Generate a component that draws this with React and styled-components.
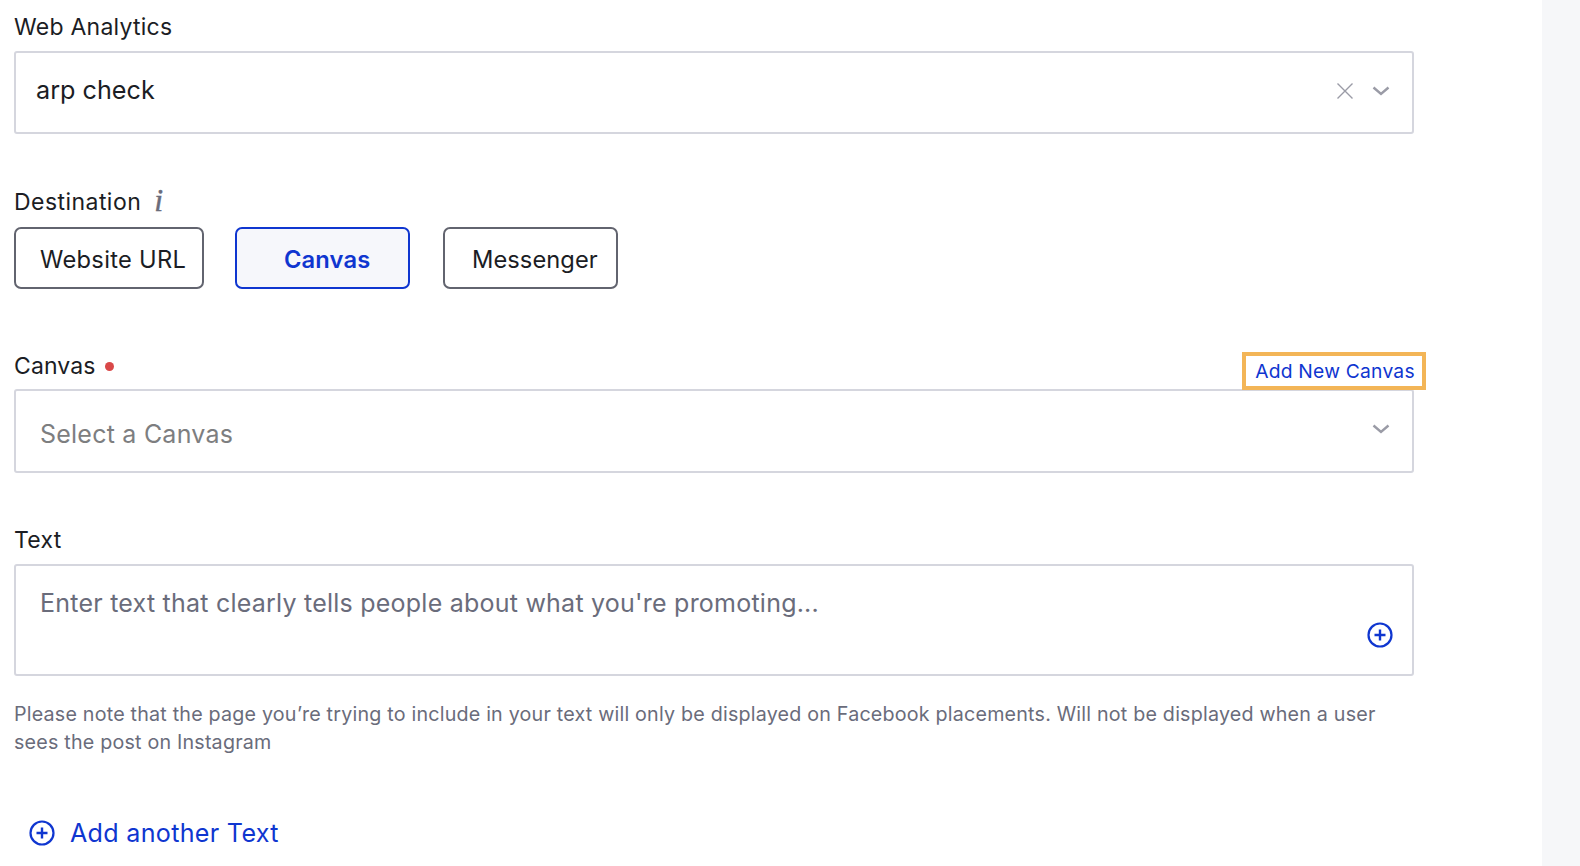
import React from 'react';
import styled, { createGlobalStyle } from 'styled-components';

const GlobalStyle = createGlobalStyle`
  html, body { margin: 0; padding: 0; background: #fff; }
  body { font-family: Inter, "Liberation Sans", sans-serif; color: #1b1d24; }
`;

const BLUE = '#0f36d0';

//STYLE
const Page = styled.div`display: flex; justify-content: space-between; height: 866px; overflow: hidden; background: #fff;`;
const Form = styled.div`width: 1400px; margin-left: 14px; display: flex; flex-direction: column;`;
const Sidebar = styled.div`width: 38px; background: #f6f7f9;`;

const Label = styled.div`
  display: flex; align-items: center; height: 28px; font-size: 23px; line-height: 28px; letter-spacing: 0.25px; color: #1b1d24;
`;
const TopLabel = styled(Label)`margin-top: 13px; margin-bottom: 10px;`;
const Box = styled.div`
  box-sizing: border-box; display: flex; align-items: ${p => p.$top ? 'flex-start' : 'center'}; width: 100%; height: ${p => p.$height}px;
  padding: ${p => p.$top ? '22px 22px 0 24px' : '0 22px 4px 24px'};
  background: #fff; border: 2px solid #d5d6de; border-radius: 3px; position: relative;
`;
const Value = styled.span`flex: 1; font-size: 25.2px; color: #1b1d24; margin-left: -4px; margin-bottom: 2px;`;
const Placeholder = styled.span`flex: 1; font-size: 25px; letter-spacing: 0.23px; color: ${p => p.$dark ? '#6a6c7b' : '#7d7e80'}; margin-top: ${p => p.$mt || 0}px;`;
const Icons = styled.div`display: flex; align-items: center; gap: 18px; color: #9a9ba6;`;
const CanvasIcons = styled(Icons)`margin-bottom: 1px;`;

const Destination = styled.div`display: flex; flex-direction: column; margin-top: 54px;`;
const DestRow = styled(Label)`gap: 13px; letter-spacing: 0.45px;`;
const InfoMark = styled.span`font-family: "Liberation Serif", serif; font-style: italic; font-size: 32px; color: #6a6c7b; line-height: 28px; margin-bottom: 4px; -webkit-text-stroke: 0.4px #6a6c7b;`;
const Options = styled.div`display: flex; margin-top: 11px;`;
const Option = styled.button`
  box-sizing: border-box; height: 62px; width: ${p => p.$width}px; margin-right: ${p => p.$gap || 0}px;
  padding: 2px 0 0 ${p => p.$pad}px; text-align: left; border-radius: 7px; font-family: inherit; font-size: 23.7px; letter-spacing: ${p => p.$ls}px;
  border: 2px solid ${p => p.$active ? BLUE : '#62646f'}; background: ${p => p.$active ? '#f6f7fb' : '#fff'};
  color: ${p => p.$active ? BLUE : '#1b1d24'}; font-weight: ${p => p.$active ? 600 : 400};
`;

const CanvasHead = styled.div`display: flex; justify-content: space-between; align-items: flex-end; margin-top: 62px; height: 39px;`;
const CanvasLabel = styled(Label)`gap: 10px; margin-bottom: 10px; letter-spacing: 0.1px;`;
const RequiredDot = styled.span`width: 9px; height: 9px; border-radius: 50%; background: #d94848;`;
const AddCanvas = styled.a`
  box-sizing: border-box; width: 184px; height: 38px; margin-right: -12px; padding-left: 2px; border: 4px solid #f3b557; background: #fff; position: relative; z-index: 1;
  display: flex; align-items: center; justify-content: center; color: ${BLUE}; font-size: 19.3px; letter-spacing: 0.2px; white-space: nowrap;
`;
const CanvasBox = styled(Box)`margin-top: -1px;`;

const TextLabel = styled(Label)`margin-top: 53px; margin-bottom: 10px;`;
const TextAdd = styled.div`position: absolute; right: 19px; bottom: 26px; color: ${BLUE}; display: flex;`;
const Note = styled.p`margin: 24px 0 0; font-size: 19.7px; line-height: 28px; letter-spacing: 0.2px; color: #6a6c7b; width: 1390px;`;
const AddText = styled.div`display: flex; align-items: center; gap: 15px; margin: 61px 0 0 15px; color: ${BLUE}; font-size: 25.1px; letter-spacing: 0.3px; line-height: 32px;`;

const CloseIcon = () => (
  <svg width="18" height="18" viewBox="0 0 18 18" fill="none" stroke="currentColor" strokeWidth="1.4">
    <path d="M1.5 1.5l15 15M16.5 1.5l-15 15" />
  </svg>
);

const ChevronIcon = () => (
  <svg width="18" height="10" viewBox="0 0 18 10" fill="none" stroke="currentColor" strokeWidth="2.4">
    <path d="M1.5 1.5L9 8l7.500-6.500" />
  </svg>
);

const PlusCircle = () => (
  <svg width="26" height="26" viewBox="0 0 26 26" fill="none" stroke="currentColor" strokeWidth="2.2">
    <circle cx="13" cy="13" r="11.500" />
    <path d="M13 7.500v11M7.500 13h11" strokeWidth="2.400" />
  </svg>
);

export default function App() {
  return (
    <Page>
      <GlobalStyle />
      <Form>
        <TopLabel>Web Analytics</TopLabel>
        <Box $height={83}>
          <Value>arp check</Value>
          <Icons><CloseIcon /><ChevronIcon /></Icons>
        </Box>

        <Destination>
          <DestRow>Destination <InfoMark>i</InfoMark></DestRow>
          <Options>
            <Option $width={190} $gap={31} $pad={24} $ls={0.3}>Website URL</Option>
            <Option $width={175} $gap={33} $pad={47} $ls={0.15} $active>Canvas</Option>
            <Option $width={175} $pad={27} $ls={0.05}>Messenger</Option>
          </Options>
        </Destination>

        <CanvasHead>
          <CanvasLabel>Canvas <RequiredDot /></CanvasLabel>
          <AddCanvas>Add New Canvas</AddCanvas>
        </CanvasHead>
        <CanvasBox $height={84}>
          <Placeholder $mt={9}>Select a Canvas</Placeholder>
          <CanvasIcons><ChevronIcon /></CanvasIcons>
        </CanvasBox>

        <TextLabel>Text</TextLabel>
        <Box $height={112} $top>
          <Placeholder $dark>Enter text that clearly tells people about what you're promoting...</Placeholder>
          <TextAdd><PlusCircle /></TextAdd>
        </Box>
        <Note>
          Please note that the page you’re trying to include in your text will only be displayed on Facebook placements. Will not be displayed when a user sees the post on Instagram
        </Note>
        <AddText><PlusCircle />Add another Text</AddText>
      </Form>
      <Sidebar />
    </Page>
  );
}
